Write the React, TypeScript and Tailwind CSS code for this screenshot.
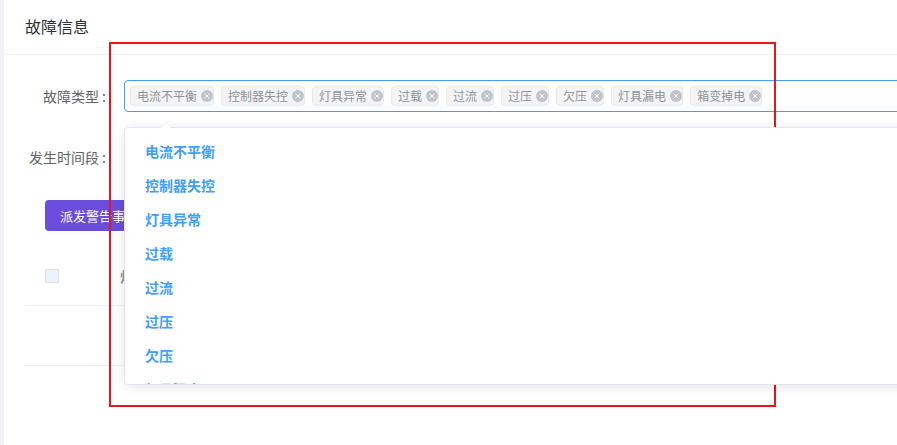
import React from "react";

const tags = ["电流不平衡", "控制器失控", "灯具异常", "过载", "过流", "过压", "欠压", "灯具漏电", "箱变掉电"];
const options = ["电流不平衡", "控制器失控", "灯具异常", "过载", "过流", "过压", "欠压", "灯具漏电", "箱变掉电"];

function Tag({ label }: { label: string }) {
  return (
    <span className="flex h-[20px] shrink-0 items-center rounded-[4px] border border-[#e9e9eb] bg-[#f4f4f5] pl-[6px] text-[12px] leading-[18px] text-[#909399]">
      <span>{label}</span>
      <span className="ml-[4px] flex h-[12px] w-[12px] items-center justify-center rounded-full bg-[#c0c4cc]">
        <svg width="6" height="6" viewBox="0 0 6 6">
          <path d="M1 1L5 5M5 1L1 5" stroke="#ffffff" strokeWidth="1" strokeLinecap="round" />
        </svg>
      </span>
    </span>
  );
}

export default function App() {
  return (
    <div className="relative flex h-[445px] w-[897px] overflow-hidden bg-[#f0f2f5] font-['Microsoft_YaHei','Noto_Sans_CJK_SC',sans-serif]">
      <div className="ml-[4px] flex flex-1 flex-col bg-white">
        <div className="flex h-[55px] shrink-0 items-center border-b border-[#ebeef5] pl-[21px] pb-[2px] text-[16px] text-[#303133]">
          故障信息
        </div>

        <div className="flex flex-col pt-[25px]">
          <div className="flex h-[32px] items-center">
            <div className="w-[120px] shrink-0 pr-[18px] text-right text-[14px] text-[#606266]">
              故障类型<span className="ml-[3px]">:</span>
            </div>
            <div className="relative h-[32px] w-[800px] shrink-0">
              <div className="flex h-[32px] items-center gap-x-[7px] rounded-[4px] border border-[#409eff] pl-[5px]">
                {tags.map((t) => (
                  <Tag key={t} label={t} />
                ))}
              </div>
              <div className="absolute left-0 top-[47px] z-10 h-[258px] w-[800px] rounded-[4px] border border-[#e4e7ed] bg-white shadow-[0_2px_12px_rgba(0,0,0,0.1)]">
                <div className="absolute left-[35px] top-[-6px] h-0 w-0 border-x-[6px] border-b-[6px] border-x-transparent border-b-[#e4e7ed]" />
                <div className="absolute left-[36px] top-[-5px] h-0 w-0 border-x-[5px] border-b-[5px] border-x-transparent border-b-white" />
                <div className="h-full overflow-hidden rounded-[4px]">
                  <ul className="pt-[6px]">
                    {options.map((o) => (
                      <li key={o} className="h-[34px] px-[20px] text-[14px] font-bold leading-[34px] text-[#409eff]">
                        {o}
                      </li>
                    ))}
                  </ul>
                </div>
              </div>
            </div>
          </div>

          <div className="mt-[29px] flex h-[32px] items-center">
            <div className="w-[120px] shrink-0 pr-[18px] text-right text-[14px] text-[#606266]">
              发生时间段<span className="ml-[3px]">:</span>
            </div>
            <div className="h-[32px] w-[360px] rounded-[4px] border border-[#dcdfe6]" />
          </div>

          <div className="mt-[27px] flex pl-[41px]">
            <button className="h-[31px] rounded-[4px] bg-[#6a4ddc] pl-[15px] pr-[15px] text-[13px] text-white">
              派发警告事件
            </button>
          </div>

          <div className="ml-[20px] mt-[16px] flex flex-col">
            <div className="flex h-[59px] items-center border-b border-[#ebeef5] pl-[21px]">
              <span className="h-[14px] w-[14px] rounded-[2px] border border-[#dcdfe6] bg-[#edf2fc]" />
              <span className="ml-[61px] text-[14px] font-bold text-[#909399]">灯具名称</span>
            </div>
            <div className="h-[60px] border-b border-[#ebeef5]" />
          </div>
        </div>
      </div>

      <div className="absolute left-[109px] top-[42px] h-[365px] w-[667px] border-2 border-[#e8151d]" />
      <svg className="absolute left-0 top-0" width="897" height="445" viewBox="0 0 897 445">
        <line x1="838" y1="249" x2="786" y2="276.5" stroke="#e8151d" strokeWidth="3" strokeLinecap="round" />
        <polygon points="776,282 788,270.5 792,279" fill="#e8151d" />
      </svg>
    </div>
  );
}
